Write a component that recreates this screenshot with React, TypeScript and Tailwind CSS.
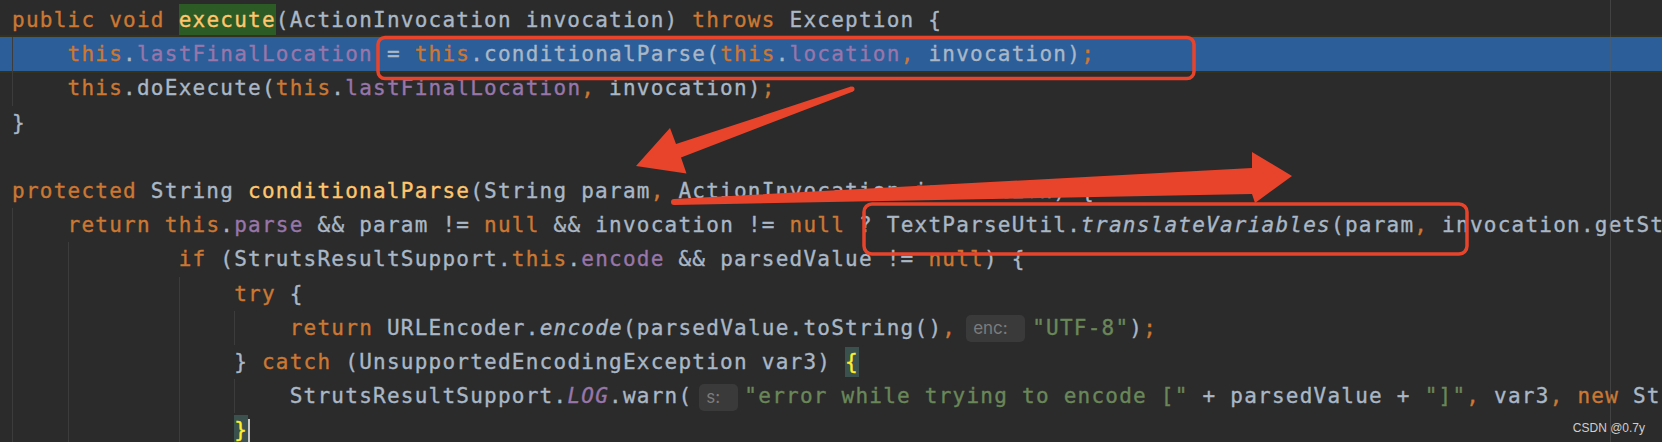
import React from "react";

const KW = "text-[#cc7832]";
const FLD = "text-[#9876aa]";
const STR = "text-[#6a8759]";
const FN = "text-[#ffc66d]";
const BRACE = "bg-[#3b514d] py-[3px] text-[#ffef28]";

interface RowProps {
    indent?: number;
    guides?: number[];
    className?: string;
    children?: React.ReactNode;
}

// one editor line; leading spaces are split so each indent guide sits on its own column
function Row({ indent = 0, guides = [], className = "", children }: RowProps) {
    const stops = [...guides, indent];
    const lead = guides.length ? guides[0] : indent;

    return (
        <div className={`flex h-[34.2px] shrink-0 pl-[12px] ${className}`}>
            {lead > 0 && <span className="whitespace-pre">{" ".repeat(lead)}</span>}
            {guides.map((g, i) => (
                <span
                    key={g}
                    className="whitespace-pre shadow-[inset_1px_0_0_#3c3c3c]"
                >
                    {" ".repeat(stops[i + 1] - g)}
                </span>
            ))}
            <span className="whitespace-pre">{children}</span>
        </div>
    );
}

function Hint({ label, className }: { label: string; className: string }) {
    return (
        <span
            className={`inline-block h-[27px] rounded-[5px] bg-[#3a3a3a] pl-[7px] align-middle font-['Inter',sans-serif] text-[17px] leading-[27px] tracking-normal text-[#7c7c7c] [-webkit-text-stroke:0px] ${className}`}
        >
            {label}
        </span>
    );
}

export default function App() {
    return (
        <div className="relative h-[442px] w-[1662px] overflow-hidden bg-[#2b2b2b] font-['DejaVu_Sans_Mono',monospace] text-[21px] leading-[34.2px] tracking-[1.24px] text-[#a9b7c6] [-webkit-text-stroke:0.35px]">
            <div className="flex flex-col pt-[3px]">
                <Row>
                    <span className={KW}>public</span> <span className={KW}>void</span>{" "}
                    <span className={`${FN} bg-[#2d5b25] py-[4px]`}>execute</span>
                    (ActionInvocation invocation) <span className={KW}>throws</span> Exception {"{"}
                </Row>

                <Row
                    indent={4}
                    guides={[0]}
                    className="bg-[#2c5e9a] shadow-[0_-2px_0_#34311d,0_2px_0_#34311d]"
                >
                    <span className={KW}>this</span>.<span className={FLD}>lastFinalLocation</span> ={" "}
                    <span className={KW}>this</span>.conditionalParse(<span className={KW}>this</span>.
                    <span className={FLD}>location</span>
                    <span className={KW}>,</span> invocation)<span className={KW}>;</span>
                </Row>

                <Row indent={4} guides={[0]}>
                    <span className={KW}>this</span>.doExecute(<span className={KW}>this</span>.
                    <span className={FLD}>lastFinalLocation</span>
                    <span className={KW}>,</span> invocation)<span className={KW}>;</span>
                </Row>

                <Row>{"}"}</Row>
                <Row />

                <Row>
                    <span className={KW}>protected</span> String{" "}
                    <span className={FN}>conditionalParse</span>(String param<span className={KW}>,</span>{" "}
                    ActionInvocation invocation) {"{"}
                </Row>

                <Row indent={4} guides={[0]}>
                    <span className={KW}>return</span> <span className={KW}>this</span>.
                    <span className={FLD}>parse</span> &amp;&amp; param != <span className={KW}>null</span>{" "}
                    &amp;&amp; invocation != <span className={KW}>null</span> ? TextParseUtil.
                    <span className="italic">translateVariables</span>(param<span className={KW}>,</span>{" "}
                    invocation.getStack()<span className={KW}>,</span> <span className={KW}>new</span>{" "}
                    EncodingParsedValueEvaluator())
                </Row>

                <Row indent={12} guides={[0, 4]}>
                    <span className={KW}>if</span> (StrutsResultSupport.<span className={KW}>this</span>.
                    <span className={FLD}>encode</span> &amp;&amp; parsedValue !={" "}
                    <span className={KW}>null</span>) {"{"}
                </Row>

                <Row indent={16} guides={[0, 4, 12]}>
                    <span className={KW}>try</span> {"{"}
                </Row>

                <Row indent={20} guides={[0, 4, 12, 16]}>
                    <span className={KW}>return</span> URLEncoder.<span className="italic">encode</span>
                    (parsedValue.toString()<span className={KW}>,</span>
                    <Hint label="enc:" className="ml-[10px] mr-[7px] w-[59px]" />
                    <span className={STR}>"UTF-8"</span>)<span className={KW}>;</span>
                </Row>

                <Row indent={16} guides={[0, 4, 12]}>
                    {"}"} <span className={KW}>catch</span> (UnsupportedEncodingException var3){" "}
                    <span className={BRACE}>{"{"}</span>
                </Row>

                <Row indent={20} guides={[0, 4, 12, 16]}>
                    StrutsResultSupport.<span className={`${FLD} italic`}>LOG</span>.warn(
                    <Hint label="s:" className="ml-[7px] mr-[6px] w-[39px]" />
                    <span className={STR}>"error while trying to encode ["</span> + parsedValue +{" "}
                    <span className={STR}>"]"</span>
                    <span className={KW}>,</span> var3<span className={KW}>,</span>{" "}
                    <span className={KW}>new</span> String[]{"{"}parsedValue{"}"})
                    <span className={KW}>;</span>
                </Row>

                <Row indent={16} guides={[0, 4, 12]}>
                    <span className={BRACE}>{"}"}</span>
                    <span className="inline-block h-[25px] w-[2px] bg-[#c8c8c8] align-middle" />
                </Row>
            </div>

            {/* right margin guide */}
            <div className="absolute bottom-0 left-[1610px] top-0 w-px bg-[#5a5a5a]/50" />

            {/* red annotation marks */}
            <svg
                className="pointer-events-none absolute left-0 top-0"
                width="1662"
                height="442"
                viewBox="0 0 1662 442"
            >
                <rect x="378" y="37.5" width="816" height="41" rx="7" fill="none" stroke="#e8442b" strokeWidth="3.5" />
                <rect x="864" y="204" width="603" height="50" rx="8" fill="none" stroke="#e8442b" strokeWidth="3.5" />
                <polygon
                    points="636,166 670,128 676,144 851,86.6 853,91.4 681,157.5 686.5,173.5"
                    fill="#e8442b"
                />
                <circle cx="852" cy="89" r="2.5" fill="#e8442b" />
                <polygon
                    points="674,199 1252,168 1252,152 1292,176 1255,203 1252,194 674,205"
                    fill="#e8442b"
                />
                <circle cx="674" cy="202" r="3" fill="#e8442b" />
            </svg>

            <span className="absolute bottom-[8px] right-[17px] font-['Liberation_Sans',Arial,sans-serif] text-[12px] leading-none tracking-normal text-[#cfcfcf] [-webkit-text-stroke:0px]">
                CSDN @0.7y
            </span>
        </div>
    );
}
